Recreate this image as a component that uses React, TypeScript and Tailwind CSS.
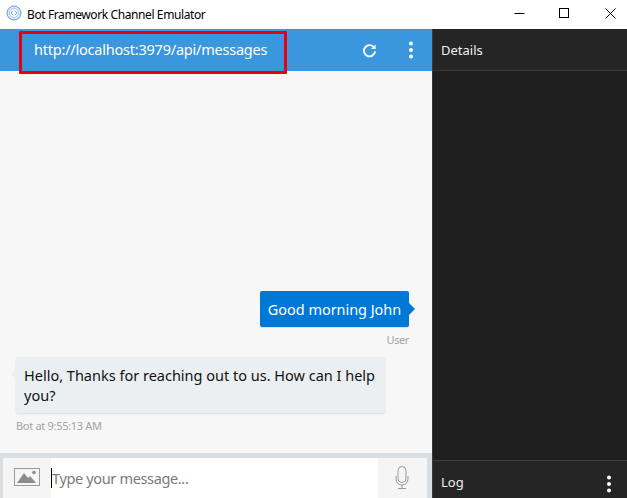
import React from "react";

function Dots({ className }: { className: string }) {
  return (
    <svg width="6" height="18" viewBox="0 0 6 18" className={className} fill="#fff">
      <circle cx="3" cy="2.5" r="2" />
      <circle cx="3" cy="9" r="2" />
      <circle cx="3" cy="15.5" r="2" />
    </svg>
  );
}

export default function App() {
  return (
    <div className="relative flex h-[498px] w-[627px] flex-col overflow-hidden bg-white font-['Noto_Sans','Open_Sans',sans-serif]">
      {/* title bar */}
      <div className="flex h-[29px] shrink-0 items-center bg-white">
        <svg width="16" height="16" viewBox="0 0 16 16" className="mb-[3px] ml-[6px]" fill="none">
          <circle cx="8" cy="8" r="7" fill="#dcebf7" stroke="#5b9bd5" strokeWidth="1" />
          <circle cx="8" cy="8" r="4.6" fill="#f4f9fd" stroke="#9cc3e6" strokeWidth="0.8" />
          <path d="M7 5.8 4.9 8 7 10.2M9 5.8 11.1 8 9 10.2" stroke="#5b9bd5" strokeWidth="0.9" />
        </svg>
        <span className="ml-[5px] text-[12px] tracking-[-0.4px] text-black">Bot Framework Channel Emulator</span>
        <div className="ml-auto flex items-center pb-[2px]">
          <svg width="11" height="11" viewBox="0 0 11 11" className="mr-[34px]" stroke="#000" fill="none">
            <path d="M0.5 5.5h10" />
          </svg>
          <svg width="11" height="11" viewBox="0 0 11 11" className="mr-[35px]" stroke="#000" fill="none">
            <rect x="0.5" y="0.5" width="9" height="9" strokeWidth="1" />
          </svg>
          <svg width="11" height="11" viewBox="0 0 11 11" className="mr-[11px]" stroke="#000" fill="none">
            <path d="M0.5 0.5l10 10M10.5 0.5l-10 10" />
          </svg>
        </div>
      </div>

      <div className="flex min-h-0 flex-1">
        {/* left column */}
        <div className="flex w-[432px] shrink-0 flex-col bg-[#f7f7f7]">
          <div className="flex h-[42px] shrink-0 items-center bg-[#3a96dd] pl-[34px] pr-[18px] text-white">
            <span className="text-[14.5px] tracking-[-0.22px]">http://localhost:3979/api/messages</span>
            <svg width="15" height="15" viewBox="0 0 16 16" className="ml-auto mr-[31px]" fill="none" stroke="#fff" strokeWidth="2">
              <path d="M13.2 5.2A6 6 0 1 0 14 9" />
              <path d="M14.5 1.5v4.8H9.7" fill="#fff" stroke="none" />
            </svg>
            <Dots className="" />
          </div>

          <div className="flex min-h-0 flex-1 flex-col justify-end px-[16px] pb-[19px]">
            <div className="flex flex-col items-end pr-[7px]">
              <div className="relative flex h-[36px] w-[149px] items-center justify-center rounded-[2px] bg-[#0078d7] pt-[1px] text-[14.5px] tracking-[-0.05px] text-white shadow-[0_1px_1px_rgba(0,0,0,0.1)]">
                Good morning John
                <span className="absolute right-[-6px] top-[12px] h-0 w-0 border-y-[6px] border-l-[6px] border-y-transparent border-l-[#0078d7]" />
              </div>
              <div className="mt-[5px] text-[11px] leading-[16px] tracking-[-0.4px] text-[#a3a3a3]">User</div>
            </div>
            <div className="relative mt-[9px] h-[56px] w-[369px] rounded-[2px] bg-[#eceff1] px-[8px] py-[8px] text-[14.5px] leading-[20px] text-[#111111] shadow-[0_1px_2px_rgba(0,0,0,0.12)]">
              Hello, Thanks for reaching out to us. How can I help you?
              <span className="absolute left-[-5px] top-[12px] h-0 w-0 border-y-[5px] border-r-[5px] border-y-transparent border-r-[#eceff1]" />
            </div>
            <div className="mt-[5px] text-[11px] leading-[16px] tracking-[-0.3px] text-[#a3a3a3]">Bot at 9:55:13 AM</div>
          </div>

          <div className="flex h-[45px] shrink-0 border-x-[3px] border-t-[5px] border-r-[5px] border-[#dbdee1] bg-white">
            <div className="flex w-[48px] shrink-0 items-center justify-center bg-[#f5f5f5] pb-[2px]">
              <svg width="26" height="18" viewBox="0 0 26 18" fill="none">
                <rect x="0.5" y="0.5" width="25" height="17" stroke="#9a9a9a" />
                <path d="M3 15 10 5l4 5 2-2 6 7z" fill="#8c8c8c" />
                <circle cx="20" cy="4.5" r="1.8" fill="#8c8c8c" />
              </svg>
            </div>
            <div className="flex flex-1 items-center">
              <span className="h-[20px] w-px bg-black" />
              <span className="pt-[2px] text-[14.5px] tracking-[-0.35px] text-[#7a7a7a]">Type your message...</span>
            </div>
            <div className="flex w-[49px] shrink-0 items-center justify-center bg-[#f5f5f5] pr-[2px]">
              <svg width="14" height="24" viewBox="0 0 14 24" fill="none" stroke="#9a9a9a">
                <rect x="3" y="0.5" width="8" height="16" rx="4" />
                <path d="M1 10v3a6 6 0 0 0 12 0v-3M7 19v3M3 22.5h8" />
              </svg>
            </div>
          </div>
        </div>

        {/* right column */}
        <div className="flex flex-1 flex-col border-l border-l-[#3a3a3a] bg-[#1e1e1e]">
          <div className="flex h-[42px] shrink-0 items-center border-b border-b-[#3a3a3a] bg-[#252526] pl-[8px] pt-[2px] text-[13px] text-[#f0f0f0]">
            Details
          </div>
          <div className="flex-1" />
          <div className="flex h-[38px] shrink-0 items-center justify-between border-t border-t-[#3f3f3f] bg-[#252526] pl-[8px] pr-[15px] text-[13px] text-[#f0f0f0]">
            <span className="pt-[6px]">Log</span>
            <Dots className="mt-[8px]" />
          </div>
        </div>
      </div>

      {/* red annotation */}
      <div className="absolute left-[19px] top-[31px] h-[43px] w-[268px] rounded-[1px] border-[3px] border-[#e8000f]" />
    </div>
  );
}
